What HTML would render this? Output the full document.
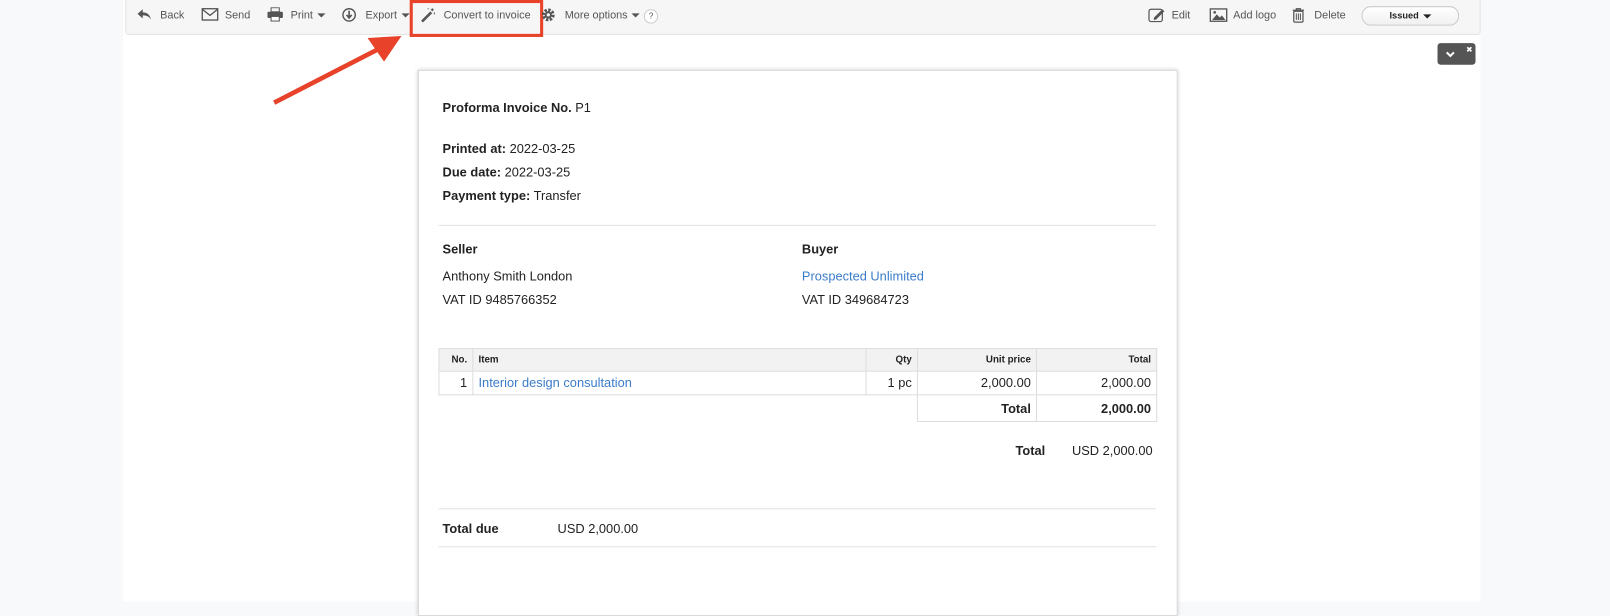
<!DOCTYPE html>
<html><head><style>
body{margin:0;width:1610px;height:586px;background:#f8f9fb;font-family:"Liberation Sans",sans-serif;color:#222;overflow:hidden}
.wrap{position:absolute;left:0;top:0;width:1568px;height:571px;transform:scale(1.02679);transform-origin:0 0}
.main{position:absolute;left:120px;top:0;width:1322px;height:586px;background:#fff}
.tb{position:absolute;left:122px;top:-1px;width:1318px;height:33px;background:#f6f6f6;border:1px solid #e2e2e2;border-radius:0 0 3px 3px}
.t{position:absolute;top:9px;font-size:10.6px;color:#555;white-space:nowrap}
.t svg{position:absolute;left:-23px;top:-2px}
.caret{display:inline-block;border-left:4px solid transparent;border-right:4px solid transparent;border-top:4px solid #555;vertical-align:middle;margin-left:4px}
.paper{position:absolute;left:407px;top:68px;width:738px;height:530px;background:#fff;border:1px solid #d8d8d8;box-shadow:0 0 4px rgba(0,0,0,.25)}
.p{position:absolute;font-size:12.5px;white-space:nowrap}
b{font-weight:bold}
.hr{position:absolute;left:19px;width:699px;height:1px;background:#e3e3e3}
table{position:absolute;left:19px;top:270px;border-collapse:collapse;font-size:12.5px;table-layout:fixed;width:699px}
td{border:1px solid #ddd;height:22px;padding:0 5px}
.h td{background:#f2f2f2;font-size:9.5px;font-weight:bold;height:21px}
.r{text-align:right}
a{color:#3a7cc9;text-decoration:none}
</style></head><body>
<div class="wrap">
<div class="main"></div>
<div class="tb"></div>
<div class="t" style="left:156px"><svg width="16" height="14"><path d="M6 2 L1 6.5 L6 11 V8 C10 8 12 9 14 12 C13 7 10 5 6 5 Z" fill="#555"/></svg>Back</div>
<div class="t" style="left:219px"><svg width="18" height="14"><rect x="1" y="1.5" width="15" height="11" fill="none" stroke="#555" stroke-width="1.3"/><path d="M1 2 L8.5 8 L16 2" fill="none" stroke="#555" stroke-width="1.3"/></svg>Send</div>
<div class="t" style="left:283px"><svg width="16" height="14"><rect x="4" y="0.5" width="8" height="4" fill="none" stroke="#555"/><rect x="0.5" y="4.5" width="15" height="6" rx="1" fill="#555"/><rect x="4" y="9" width="8" height="4.5" fill="#fff" stroke="#555"/></svg>Print<span class="caret"></span></div>
<div class="t" style="left:356px"><svg width="16" height="16"><circle cx="7" cy="7.5" r="6" fill="none" stroke="#555" stroke-width="1.4"/><path d="M7 3.5 V10 M4.5 7.5 L7 10.5 L9.5 7.5" fill="none" stroke="#555" stroke-width="1.6"/></svg>Export<span class="caret"></span></div>
<div style="position:absolute;left:399px;top:0;width:124px;height:30px;border:3px solid #e8432a"></div>
<div class="t" style="left:432px"><svg width="16" height="16"><path d="M2 14 L11 5" stroke="#555" stroke-width="2.5"/><path d="M12 1 V4 M10.5 2.5 H13.5 M14 5 V7 M8 1 V2" stroke="#555"/></svg>Convert to invoice</div>
<div class="t" style="left:550px"><svg width="16" height="16"><circle cx="7" cy="7.5" r="4.5" fill="none" stroke="#555" stroke-width="3.5" stroke-dasharray="2.2 1.3"/><circle cx="7" cy="7.5" r="3.5" fill="#555"/><circle cx="7" cy="7.5" r="1.6" fill="#f6f6f6"/></svg>More options<span class="caret"></span></div>
<div style="position:absolute;left:627px;top:9px;width:12px;height:12px;border:1px solid #ccc;border-radius:50%;font-size:8px;text-align:center;line-height:12px;color:#555;background:#fff">?</div>
<div class="t" style="left:1141px"><svg width="18" height="16"><rect x="1" y="2" width="13" height="12" rx="2" fill="none" stroke="#555" stroke-width="1.2"/><path d="M6 10 L14 2 L16 4 L8 12 L5.5 12.5 Z" fill="#555"/></svg>Edit</div>
<div class="t" style="left:1201px"><svg width="18" height="16"><rect x="0.7" y="1.7" width="16" height="12" fill="none" stroke="#555" stroke-width="1.3"/><path d="M2.5 12.5 L7 7 L10 10 L12 8 L15.5 12.5 Z" fill="#555"/><circle cx="5" cy="5" r="1.3" fill="#555"/></svg>Add logo</div>
<div class="t" style="left:1280px"><svg width="16" height="16"><path d="M2 3 H13 M5.5 3 V1.5 H9.5 V3" fill="none" stroke="#555" stroke-width="1.2"/><rect x="3" y="4" width="9" height="10.5" rx="1" fill="none" stroke="#555" stroke-width="1.2"/><path d="M5.5 6 V12.5 M7.5 6 V12.5 M9.5 6 V12.5" stroke="#555"/></svg>Delete</div>
<div style="position:absolute;left:1326px;top:6px;width:93px;height:17px;border:1px solid #ccc;border-radius:9px;background:linear-gradient(#fff,#f0f0f0);font-size:9px;font-weight:bold;text-align:center;line-height:17px;color:#222">Issued<span class="caret" style="border-top-color:#222"></span></div>
<div style="position:absolute;left:1400px;top:42px;width:37px;height:21px;background:#555;border-radius:3px"><svg width="37" height="21"><path d="M9 9 L12.5 12.5 L16 9" stroke="#fff" stroke-width="2" fill="none"/><path d="M29 4 L33 8 M33 4 L29 8" stroke="#fff" stroke-width="1.7"/></svg></div>
<svg style="position:absolute;left:260px;top:30px" width="140" height="75"><path d="M7 70 L110 17" stroke="#e8432a" stroke-width="4.5"/><path d="M131 5 L98 7 L114 30 Z" fill="#e8432a"/></svg>
<div class="paper">
<div class="p" style="left:23px;top:29px"><b>Proforma Invoice No.</b> P1</div>
<div class="p" style="left:23px;top:69px"><b>Printed at:</b> 2022-03-25</div>
<div class="p" style="left:23px;top:92px"><b>Due date:</b> 2022-03-25</div>
<div class="p" style="left:23px;top:115px"><b>Payment type:</b> Transfer</div>
<div class="hr" style="top:150px"></div>
<div class="p" style="left:23px;top:167px"><b>Seller</b></div>
<div class="p" style="left:23px;top:193px">Anthony Smith London</div>
<div class="p" style="left:23px;top:216px">VAT ID 9485766352</div>
<div class="p" style="left:373px;top:167px"><b>Buyer</b></div>
<div class="p" style="left:373px;top:193px"><a>Prospected Unlimited</a></div>
<div class="p" style="left:373px;top:216px">VAT ID 349684723</div>
<table>
<colgroup><col style="width:33px"><col style="width:383px"><col style="width:50px"><col style="width:116px"><col style="width:117px"></colgroup>
<tr class="h"><td class="r">No.</td><td>Item</td><td class="r">Qty</td><td class="r">Unit price</td><td class="r">Total</td></tr>
<tr><td class="r">1</td><td><a>Interior design consultation</a></td><td class="r">1 pc</td><td class="r">2,000.00</td><td class="r">2,000.00</td></tr>
<tr><td style="border:0"></td><td style="border:0"></td><td style="border:0;border-right:1px solid #ddd"></td><td class="r" style="height:25px"><b>Total</b></td><td class="r"><b>2,000.00</b></td></tr>
</table>
<div class="p" style="left:581px;top:363px"><b>Total</b></div>
<div class="p" style="left:636px;top:363px">USD 2,000.00</div>
<div class="hr" style="top:426px"></div>
<div class="p" style="left:23px;top:439px"><b>Total due</b></div>
<div class="p" style="left:135px;top:439px">USD 2,000.00</div>
<div class="hr" style="top:463px"></div>
</div>
</div>
</body></html>
